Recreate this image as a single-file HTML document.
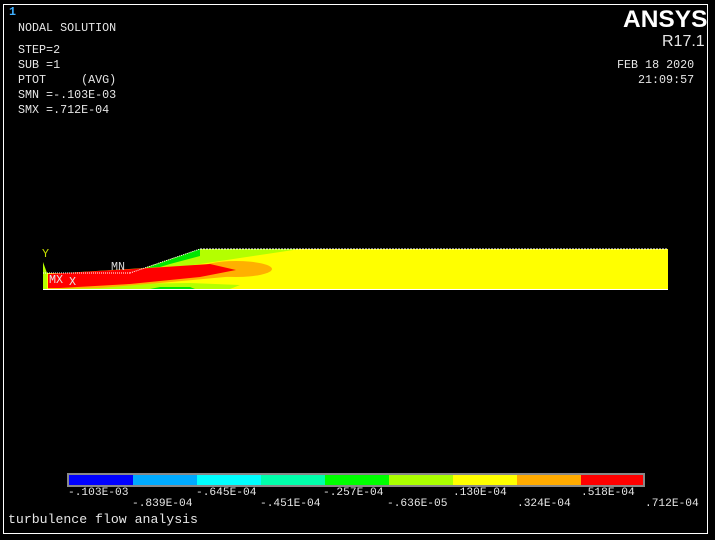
<!DOCTYPE html>
<html><head><style>
body{margin:0;background:#000;width:715px;height:540px;overflow:hidden;position:relative;}
.t{position:absolute;color:#e6e6e6;white-space:pre;}
.m{font-family:"Liberation Mono",monospace;font-size:11.7px;line-height:12px;}
.s{font-size:11.2px;}
</style></head><body>
<div style="position:absolute;left:3px;top:4px;width:703px;height:528px;border:1px solid #fff;"></div>
<div class="t m" style="left:9px;top:6px;color:#40b0ff;font-weight:bold;">1</div>
<div class="t m" style="left:18px;top:22px;">NODAL SOLUTION</div>
<div class="t m" style="left:18px;top:44px;">STEP=2</div>
<div class="t m" style="left:18px;top:59px;">SUB =1</div>
<div class="t m" style="left:18px;top:74px;">PTOT     (AVG)</div>
<div class="t m" style="left:18px;top:89px;">SMN =-.103E-03</div>
<div class="t m" style="left:18px;top:104px;">SMX =.712E-04</div>
<div class="t" style="left:623px;top:6px;font-family:'Liberation Sans',sans-serif;font-size:24.5px;line-height:28px;font-weight:bold;color:#fff;">ANSYS</div>
<div class="t" style="left:662px;top:33px;font-family:'Liberation Sans',sans-serif;font-size:16px;line-height:18px;color:#e6e6e6;">R17.1</div>
<div class="t m" style="left:617px;top:59px;">FEB 18 2020</div>
<div class="t m" style="left:638px;top:74px;">21:09:57</div>
<svg style="position:absolute;left:0;top:0" width="715" height="540">
<polygon points="43,273 130,273 200,249 668,249 668,289 43,289" fill="#ffff00"/>
<polygon points="130,273 200,249 300,249 240,258 160,270 110,280 60,280 55,273" fill="#b4ff00"/>
<polygon points="132,273 200,249 200,256 170,264 140,273" fill="#00e600"/>
<polygon points="60,289 230,289 240,285 190,283 110,284 70,287" fill="#b4ff00"/>
<polygon points="150,289 195,289 190,287 160,287" fill="#00e600"/>
<ellipse cx="236" cy="269" rx="36" ry="8" fill="#ffb000"/>
<polygon points="48,274 160,267 236,263 236,276 160,283 100,288 48,289" fill="#ffb000"/>
<polygon points="48,274 150,268 210,264 236,270 200,277 130,284 60,288 48,288" fill="#ff0000"/>
<polygon points="43,262 47,273 47,289 43,289" fill="#b4ff00"/>
<line x1="43" y1="289.5" x2="668" y2="289.5" stroke="#fff" stroke-width="1"/>
<line x1="43" y1="273" x2="130" y2="273" stroke="#fff" stroke-dasharray="1,1"/>
<line x1="130" y1="273" x2="200" y2="249" stroke="#fff" stroke-dasharray="1,1"/>
<line x1="200" y1="249" x2="668" y2="249" stroke="#fff" stroke-dasharray="2,1"/>
<g stroke="#888" stroke-width="2" fill="none"><rect x="68" y="474" width="576" height="12"/></g>
<rect x="69" y="475" width="64" height="10" fill="#0000ff"/>
<rect x="133" y="475" width="64" height="10" fill="#00aaff"/>
<rect x="197" y="475" width="64" height="10" fill="#00ffff"/>
<rect x="261" y="475" width="64" height="10" fill="#00ffaa"/>
<rect x="325" y="475" width="64" height="10" fill="#00ff00"/>
<rect x="389" y="475" width="64" height="10" fill="#aaff00"/>
<rect x="453" y="475" width="64" height="10" fill="#ffff00"/>
<rect x="517" y="475" width="64" height="10" fill="#ffaa00"/>
<rect x="581" y="475" width="62" height="10" fill="#ff0000"/>
</svg>
<div class="t m" style="left:42px;top:248px;color:#c8e000;">Y</div>
<div class="t m" style="left:111px;top:261px;color:#d8d8d8;">MN</div>
<div class="t m" style="left:49px;top:274px;color:#e6e6e6;">MX</div>
<div class="t m" style="left:69px;top:276px;color:#e6e6e6;">X</div>
<div class="t m s" style="left:68px;top:487px;">-.103E-03</div>
<div class="t m s" style="left:196px;top:487px;">-.645E-04</div>
<div class="t m s" style="left:323px;top:487px;">-.257E-04</div>
<div class="t m s" style="left:453px;top:487px;">.130E-04</div>
<div class="t m s" style="left:581px;top:487px;">.518E-04</div>
<div class="t m s" style="left:132px;top:498px;">-.839E-04</div>
<div class="t m s" style="left:260px;top:498px;">-.451E-04</div>
<div class="t m s" style="left:387px;top:498px;">-.636E-05</div>
<div class="t m s" style="left:517px;top:498px;">.324E-04</div>
<div class="t m s" style="left:645px;top:498px;">.712E-04</div>
<div class="t m" style="left:8px;top:514px;font-size:13.2px;">turbulence flow analysis</div>
</body></html>
